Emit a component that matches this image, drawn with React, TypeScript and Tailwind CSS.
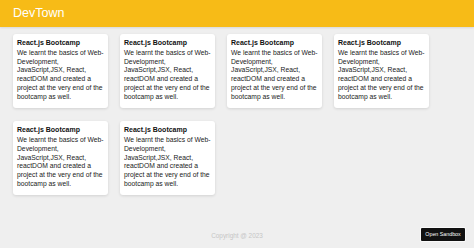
import React from 'react'

const courses = Array.from({ length: 6 }, () => ({
  title: 'React.js Bootcamp',
  text: 'We learnt the basics of Web-Development, JavaScript,JSX, React, reactDOM and created a project at the very end of the bootcamp as well.',
}))

function CourseCard({ title, text }: { title: string; text: string }) {
  return (
    <div className="bg-white rounded-[3px] shadow-[0_1px_3px_rgba(0,0,0,0.12)] px-[4px] pt-[4px] pb-[7px]">
      <h3 className="text-[7px] font-bold leading-[9px] text-[#111]">{title}</h3>
      <p className="mt-[2px] text-[6.75px] leading-[8.7px] text-[#222]">{text}</p>
    </div>
  )
}

export default function App() {
  return (
    <div
      className="relative min-h-screen flex flex-col bg-[#efefef]"
      style={{ fontFamily: '"Liberation Sans", Arial, sans-serif' }}
    >
      <header className="h-[27px] bg-[#f7bb17] flex items-center px-[13px] shadow-[0_1px_2px_rgba(0,0,0,0.1)]">
        <span className="text-[12.5px] text-white leading-none">DevTown</span>
      </header>

      <main className="flex-1 px-[13px] pt-[7px]">
        <div className="grid grid-cols-[repeat(4,95px)] gap-x-[12px] gap-y-[13px]">
          {courses.map((c, i) => (
            <CourseCard key={i} title={c.title} text={c.text} />
          ))}
        </div>
      </main>

      <footer className="h-[24px] flex items-center justify-center pb-[1px]">
        <span className="text-[6.4px] text-[#c6c6c6]">Copyright @ 2023</span>
      </footer>

      <button className="absolute right-[9px] bottom-[7px] w-[44px] h-[13px] bg-[#111] text-white text-[5.3px] rounded-[1px] ring-1 ring-white/70 flex items-center justify-center">
        Open Sandbox
      </button>
    </div>
  )
}
